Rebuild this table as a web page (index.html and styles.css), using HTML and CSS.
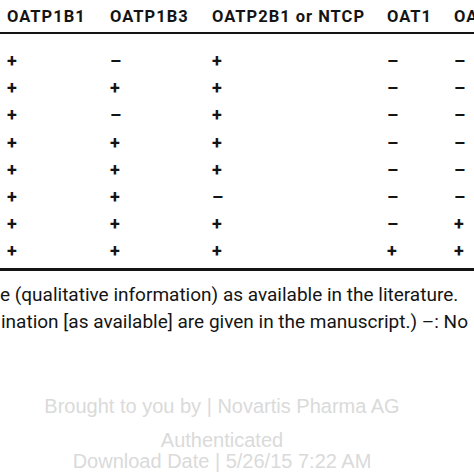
FILE: index.html
```html
<!DOCTYPE html>
<html>
<head>
<meta charset="utf-8">
<link rel="stylesheet" href="styles.css">
</head>
<body>
<div class="page">
  <div class="table">
    <div class="row head">
      <div>OATP1B1</div><div>OATP1B3</div><div>OATP2B1 or NTCP</div><div>OAT1</div><div>OAT3</div>
    </div>
    <div class="body">
      <div class="row"><div>+</div><div>–</div><div>+</div><div>–</div><div>–</div></div>
      <div class="row"><div>+</div><div>+</div><div>+</div><div>–</div><div>–</div></div>
      <div class="row"><div>+</div><div>–</div><div>+</div><div>–</div><div>–</div></div>
      <div class="row"><div>+</div><div>+</div><div>+</div><div>–</div><div>–</div></div>
      <div class="row"><div>+</div><div>+</div><div>+</div><div>–</div><div>–</div></div>
      <div class="row"><div>+</div><div>+</div><div>–</div><div>–</div><div>–</div></div>
      <div class="row"><div>+</div><div>+</div><div>+</div><div>–</div><div>+</div></div>
      <div class="row"><div>+</div><div>+</div><div>+</div><div>+</div><div>+</div></div>
    </div>
  </div>
  <div class="notes">
    <p class="l1">e (qualitative information) as available in the literature.</p>
    <p class="l2">ination [as available] are given in the manuscript.) –: No</p>
  </div>
  <div class="mark">
    <div class="m1">Brought to you by | Novartis Pharma AG</div>
    <div class="m2">Authenticated</div>
    <div class="m3">Download Date | 5/26/15 7:22 AM</div>
  </div>
</div>
</body>
</html>
```
FILE: styles.css
```css
html, body {
  margin: 0;
  padding: 0;
  background: #fff;
}
.page {
  width: 474px;
  height: 474px;
  overflow: hidden;
  font-family: Roboto, "Liberation Sans", sans-serif;
  color: #141414;
}
.table {
  padding-left: 7px;
  border-bottom: 3px solid #141414;
  width: 520px;
}
.row {
  display: grid;
  grid-template-columns: 103px 102px 175px 67px 80px;
  white-space: nowrap;
}
.head {
  height: 34px;
  box-sizing: border-box;
  padding-top: 7px;
  line-height: 20px;
  font-size: 16.5px;
  font-weight: 700;
  letter-spacing: 1px;
  border-bottom: 2px solid #141414;
  margin-left: -7px;
  padding-left: 7px;
}
.body {
  padding: 13px 0 3px;
}
.body .row {
  height: 27.2px;
  line-height: 27px;
  font-size: 18px;
  font-weight: 700;
}
.notes {
  margin-top: 10px;
  font-size: 19px;
  line-height: 27px;
  white-space: nowrap;
}
.notes p {
  margin: 0;
}
.l2 {
  padding-left: 1px;
}
.mark {
  width: 444px;
  text-align: center;
  font-family: "Liberation Sans", Arial, sans-serif;
  font-size: 20px;
  color: #dadada;
  margin-top: 60px;
  white-space: nowrap;
}
.m1 { line-height: 23px; }
.m2 { line-height: 20px; margin-top: 12px; }
.m3 { line-height: 22px; }
```
